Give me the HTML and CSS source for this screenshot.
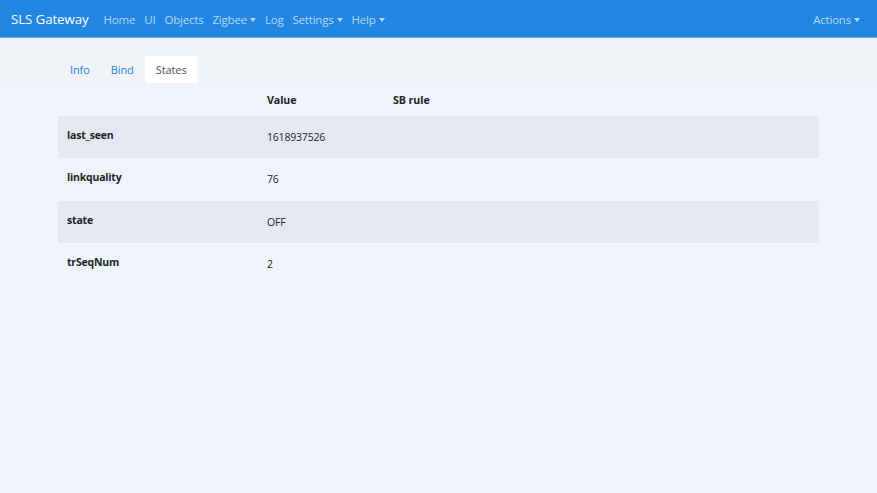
FILE: index.html
```html
<!DOCTYPE html>
<html>
<head>
<meta charset="utf-8">
<link rel="stylesheet" href="styles.css">
</head>
<body>
<nav class="navbar">
  <div class="brand">SLS Gateway</div>
  <ul class="nav">
    <li>Home</li>
    <li>UI</li>
    <li>Objects</li>
    <li class="dd">Zigbee</li>
    <li>Log</li>
    <li class="dd">Settings</li>
    <li class="dd">Help</li>
  </ul>
  <div class="actions dd">Actions</div>
</nav>
<main class="content">
  <ul class="tabs">
    <li class="tab">Info</li>
    <li class="tab">Bind</li>
    <li class="tab active">States</li>
  </ul>
  <table class="states">
    <thead>
      <tr><th class="c1"></th><th class="c2">Value</th><th class="c3">SB rule</th></tr>
    </thead>
    <tbody>
      <tr class="odd"><td class="key">last_seen</td><td>1618937526</td><td></td></tr>
      <tr><td class="key">linkquality</td><td>76</td><td></td></tr>
      <tr class="odd"><td class="key">state</td><td>OFF</td><td></td></tr>
      <tr><td class="key">trSeqNum</td><td>2</td><td></td></tr>
    </tbody>
  </table>
</main>
</body>
</html>
```
FILE: styles.css
```css
* { box-sizing: border-box; }
html, body { margin: 0; padding: 0; }
body {
  font-family: "Open Sans", "Noto Sans", sans-serif;
  background: #f0f3fa;
  color: #212529;
  height: 493px;
}
.navbar {
  display: flex;
  align-items: center;
  height: 38px;
  background: #2186e1;
  padding: 1px 17px 0 11px;
  border-bottom: 1px solid #6aaeea;
}
.brand {
  color: #fff;
  font-size: 13.3px;
  margin-right: 15px;
  letter-spacing: -0.1px;
}
.nav {
  display: flex;
  list-style: none;
  margin: 0;
  padding: 0;
  gap: 9px;
  flex: 1;
}
.nav li, .actions {
  color: #b9d8f6;
  font-size: 11.5px;
  letter-spacing: -0.2px;
}
.dd::after {
  content: "";
  display: inline-block;
  margin-left: 3px;
  vertical-align: 2px;
  border-top: 4px solid #b9d8f6;
  border-left: 3.5px solid transparent;
  border-right: 3.5px solid transparent;
}
.content {
  padding: 18px 58px 0 58px;
  background: linear-gradient(#eff3f7 0, #eff3f7 45px, #f0f3fa 45px);
}
.tabs {
  display: flex;
  list-style: none;
  margin: 0;
  padding: 0;
  height: 27px;
}
.tab {
  padding: 0 11px 0 12px;
  line-height: 27px;
  font-size: 11px;
  color: #1f7fe0;
  letter-spacing: -0.1px;
}
.tab:nth-child(2) { padding-left: 10px; }
.active {
  background: #fff;
  color: #495057;
  margin-left: 0;
  padding: 0 10px 0 11px;
}
.states {
  width: 761px;
  border-collapse: collapse;
  font-size: 10.5px;
}
.states th {
  text-align: left;
  font-weight: 700;
  height: 33px;
  padding: 0 9px;
  font-size: 10.7px;
  letter-spacing: -0.1px;
}
.c1 { width: 200px; }
.c2 { width: 126px; }
.states td {
  height: 42.3px;
  padding: 0 9px;
  letter-spacing: -0.2px;
}
.states td.key {
  font-weight: 700;
  vertical-align: top;
  padding-top: 12px;
  font-size: 10.5px;
}
.states tr.odd td { background: #e5e8f0; }
```
